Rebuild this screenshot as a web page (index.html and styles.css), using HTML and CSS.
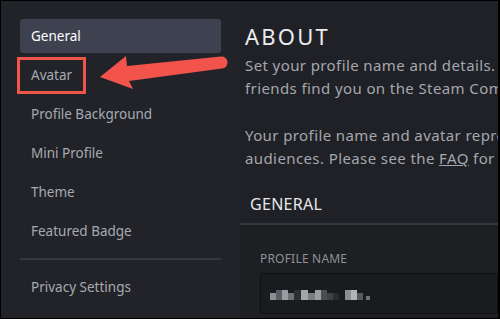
FILE: index.html
```html
<!DOCTYPE html>
<html lang="en">
<head>
    <meta charset="UTF-8">
    <title>Edit Profile</title>
    <link rel="stylesheet" href="styles.css">
</head>
<body>
    <div class="frame">
        <nav class="sidebar">
            <a class="nav-item active">General</a>
            <a class="nav-item marked">Avatar<span class="mark"></span></a>
            <a class="nav-item">Profile Background</a>
            <a class="nav-item">Mini Profile</a>
            <a class="nav-item">Theme</a>
            <a class="nav-item">Featured Badge</a>
            <div class="nav-sep"></div>
            <a class="nav-item">Privacy Settings</a>
        </nav>
        <main class="main">
            <h1>ABOUT</h1>
            <p>Set your profile name and details. Providing additional information like your real name can help<br>friends find you on the Steam Community.</p>
            <p>Your profile name and avatar represent you throughout Steam, and must be appropriate for all<br>audiences. Please see the <u>FAQ</u> for more information.</p>
            <h2 class="section-title">GENERAL</h2>
            <div class="section-body">
                <div class="field-label">PROFILE NAME</div>
                <div class="field-input">
                    <svg class="pixels" width="104" height="11" viewBox="0 0 104 11">
                        <rect x="0" y="3" width="6" height="7" fill="#8c8f94"/>
                        <rect x="6" y="0" width="6" height="10" fill="#5a5d62"/>
                        <rect x="12" y="0" width="6" height="10" fill="#9a9da2"/>
                        <rect x="18" y="3" width="6" height="7" fill="#6d7075"/>
                        <rect x="24" y="0" width="7" height="10" fill="#2c2e33"/>
                        <rect x="31" y="0" width="7" height="10" fill="#a3a6aa"/>
                        <rect x="38" y="3" width="7" height="7" fill="#7b7e83"/>
                        <rect x="45" y="0" width="6" height="10" fill="#9b9ea2"/>
                        <rect x="51" y="0" width="6" height="10" fill="#4a4d52"/>
                        <rect x="57" y="3" width="6" height="7" fill="#3d4045"/>
                        <rect x="63" y="3" width="6" height="7" fill="#2a2c30"/>
                        <rect x="75" y="0" width="6" height="10" fill="#8a8d92"/>
                        <rect x="81" y="0" width="6" height="10" fill="#b0b3b7"/>
                        <rect x="87" y="3" width="6" height="7" fill="#55585d"/>
                        <rect x="96" y="6" width="4" height="4" fill="#6e7176"/>
                    </svg>
                </div>
            </div>
        </main>
        <svg class="arrow" width="500" height="319" viewBox="0 0 500 319">
            <path d="M100 77 L126 56 L127 66 L221 56.5 A6 6 0 0 1 222 68.6 L129 81 L133 89 Z" fill="#f2544c"/>
        </svg>
    </div>
</body>
</html>
```

FILE: styles.css
```css
html, body {
    margin: 0;
    padding: 0;
    background: #000;
}
.frame {
    position: relative;
    width: 500px;
    height: 319px;
    box-sizing: border-box;
    border: 1px solid #000;
    border-right-width: 2px;
    display: flex;
    overflow: hidden;
    font-family: "Noto Sans", "Open Sans", sans-serif;
    background: #202227;
}
.sidebar {
    width: 239px;
    flex: 0 0 239px;
    box-sizing: border-box;
    padding: 18px 19px 0 19px;
    display: flex;
    flex-direction: column;
    gap: 5px;
    background: #212328;
}
.nav-item {
    position: relative;
    display: flex;
    align-items: center;
    height: 34px;
    padding: 0 11px;
    border-radius: 3px;
    font-size: 13.5px;
    color: #a7aab0;
    white-space: nowrap;
}
.nav-item.active {
    background: #3e4250;
    color: #fff;
}
.mark {
    position: absolute;
    left: -3px;
    top: -1px;
    width: 69px;
    height: 37px;
    box-sizing: border-box;
    border: 3px solid #ef5549;
}
.nav-sep {
    height: 2px;
    margin: 5px 0;
    background: #35383e;
}
.main {
    flex: 1;
    min-width: 0;
    padding-top: 22px;
    background: #1f2126;
}
.main h1 {
    margin: 0 0 5px 0;
    padding-left: 5px;
    font-size: 22px;
    line-height: 26px;
    font-weight: 400;
    letter-spacing: 2.2px;
    color: #ebecee;
}
.main p {
    margin: 0 0 24px 0;
    padding-left: 5px;
    font-size: 15px;
    line-height: 23px;
    letter-spacing: 0.4px;
    color: #a4a7ad;
    white-space: nowrap;
}
.section-title {
    margin: 0;
    padding: 0 10px 9px 10px;
    font-size: 16px;
    line-height: 20px;
    font-weight: 400;
    letter-spacing: 0.3px;
    color: #e6e7e9;
    border-bottom: 2px solid #34373d;
}
.section-body {
    padding: 26px 0 0 20px;
    background: #1d1f23;
    height: 100px;
}
.field-label {
    font-size: 12px;
    line-height: 16px;
    letter-spacing: 0.2px;
    color: #8e9298;
    margin-bottom: 6px;
}
.field-input {
    height: 41px;
    box-sizing: border-box;
    border: 1px solid #0f1012;
    border-radius: 3px;
    background: #1a1b1f;
    padding: 16px 0 0 9px;
}
.pixels {
    display: block;
}
.arrow {
    position: absolute;
    left: -1px;
    top: -1px;
    pointer-events: none;
}
```
